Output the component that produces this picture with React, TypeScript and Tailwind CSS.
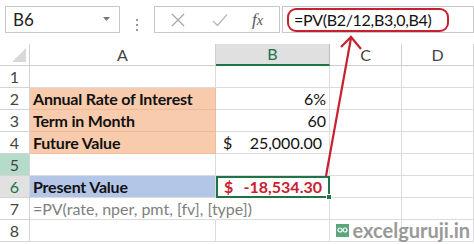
const cols = "grid grid-cols-[30px_186px_114px_72px_72px]";

function RowHead({ n, cls = "" }: { n: number; cls?: string }) {
  return (
    <div
      className={`h-[22px] border-r border-b border-[#d4d4d4] flex items-center justify-center text-[16px] text-[#444] ${cls}`}
    >
      {n}
    </div>
  );
}

function Cell({ children, cls = "" }: { children?: React.ReactNode; cls?: string }) {
  return (
    <div className={`h-[22px] border-r border-b border-[#dcdcdc] flex items-center text-[16px] ${cls}`}>
      {children}
    </div>
  );
}

export default function App() {
  return (
    <div className="relative w-[474px] h-[244px] overflow-hidden bg-white font-['Lato',sans-serif] text-[#111]">
      {/* formula bar */}
      <div className="flex h-[44px] pt-[6px]">
        <div className="ml-[5px] w-[115px] h-[27px] border border-[#c8c8c8] flex items-center justify-between px-[7px]">
          <span className="text-[17px] text-[#222]">B6</span>
          <svg width="7" height="5" viewBox="0 0 7 5" className="mr-[2px]">
            <path d="M0 0h7L3.5 4z" fill="#777" />
          </svg>
        </div>
        <div className="w-[34px] flex flex-col items-center justify-center gap-[3px]">
          <span className="w-[2px] h-[2px] bg-[#999]" />
          <span className="w-[2px] h-[2px] bg-[#999]" />
          <span className="w-[2px] h-[2px] bg-[#999]" />
        </div>
        <div className="w-[126px] h-[27px] border border-[#c8c8c8] flex items-center">
          <svg width="14" height="14" viewBox="0 0 14 14" className="ml-[16px]">
            <path d="M1 1l12 12M13 1L1 13" stroke="#a8a8a8" strokeWidth="1.3" />
          </svg>
          <svg width="16" height="14" viewBox="0 0 16 14" className="ml-[27px]">
            <path d="M1 8l4.5 4.5L15 1.5" stroke="#b8b8b8" strokeWidth="1.3" fill="none" />
          </svg>
          <span className="ml-[24px] font-['Liberation_Serif',serif] italic text-[17px] text-[#555]">
            f<span className="text-[14px]">x</span>
          </span>
        </div>
        <div className="flex-1 ml-[2px] h-[27px] border border-[#c8c8c8] flex items-center">
          <div className="ml-[4px] h-[24px] w-[162px] border-2 border-[#c9202f] rounded-[9px] flex items-center pl-[5px] text-[16px] tracking-[-0.3px] text-[#111]">
            =PV(B2/12,B3,0,B4)
          </div>
        </div>
      </div>

      {/* column headers */}
      <div className={cols}>
        <div className="h-[22px] border-r border-b border-[#cfcfcf] relative">
          <svg width="14" height="14" viewBox="0 0 14 14" className="absolute right-[3px] bottom-[3px]">
            <path d="M14 0v14H0z" fill="#d8d8d8" />
          </svg>
        </div>
        <div className="h-[22px] border-r border-b border-[#cfcfcf] flex items-center justify-center text-[16px] text-[#444]">A</div>
        <div className="h-[22px] bg-[#e0e0e0] border-r border-[#bdbdbd] border-b-2 border-b-[#217346] flex items-center justify-center text-[16px] text-[#217346]">B</div>
        <div className="h-[22px] border-r border-b border-[#cfcfcf] flex items-center justify-center text-[16px] text-[#444]">C</div>
        <div className="h-[22px] border-r border-b border-[#cfcfcf] flex items-center justify-center text-[16px] text-[#444]">D</div>
      </div>

      {/* rows */}
      <div className={cols}>
        <RowHead n={1} />
        <Cell />
        <Cell />
        <Cell />
        <Cell />

        <RowHead n={2} />
        <Cell cls="bg-[#f8cbad] border-[#eebc9c] font-bold tracking-[-0.2px] pl-[3px]">Annual Rate of Interest</Cell>
        <Cell cls="justify-end pr-[3px] border-[#cfcfcf]">6%</Cell>
        <Cell />
        <Cell />

        <RowHead n={3} />
        <Cell cls="bg-[#f8cbad] border-[#eebc9c] font-bold tracking-[-0.2px] pl-[3px]">Term in Month</Cell>
        <Cell cls="justify-end pr-[3px] border-[#cfcfcf]">60</Cell>
        <Cell />
        <Cell />

        <RowHead n={4} />
        <Cell cls="bg-[#f8cbad] border-[#eebc9c] font-bold tracking-[-0.2px] pl-[3px]">Future Value</Cell>
        <Cell cls="justify-between px-[7px] border-[#cfcfcf]">
          <span>$</span>
          <span>25,000.00</span>
        </Cell>
        <Cell />
        <Cell />

        <RowHead n={5} cls="bg-[#b5dccb] text-[#3d6b55]" />
        <Cell />
        <Cell />
        <Cell />
        <Cell />

        <RowHead n={6} cls="bg-[#e1e1e1] text-[#217346]" />
        <Cell cls="bg-[#b4c6e7] font-bold tracking-[-0.2px] pl-[3px]">Present Value</Cell>
        <div className="relative h-[22px] border-2 border-[#217346] flex items-center justify-between px-[6px] text-[16px] font-bold text-[#c9202f]">
          <span>$</span>
          <span>-18,534.30</span>
          <span className="absolute right-[-4px] bottom-[-4px] w-[6px] h-[6px] bg-[#217346] border border-white" />
        </div>
        <Cell />
        <Cell />

        <RowHead n={7} />
        <Cell cls="overflow-visible whitespace-nowrap pl-[3px] text-[#808080] border-r-transparent">
          <span className="relative z-10">=PV(rate, nper, pmt, [fv], [type])</span>
        </Cell>
        <Cell />
        <Cell />
        <Cell />

        <RowHead n={8} />
        <Cell />
        <Cell />
        <Cell />
        <Cell />
      </div>

      {/* arrow */}
      <svg className="absolute left-0 top-0 pointer-events-none" width="474" height="244">
        <path d="M326 176L351 38" stroke="#c9202f" strokeWidth="2.2" fill="none" />
        <path d="M341 47L351 37L361 49" stroke="#c9202f" strokeWidth="2.2" fill="none" />
      </svg>

      {/* watermark */}
      <div className="absolute right-[4px] bottom-[4px] flex items-center gap-[4px]">
        <svg width="13" height="13" viewBox="0 0 13 13">
          <rect width="13" height="13" fill="#5aa77e" />
          <circle cx="4" cy="6" r="2" fill="none" stroke="#fff" strokeWidth="1.2" />
          <circle cx="9" cy="6" r="2" fill="none" stroke="#fff" strokeWidth="1.2" />
        </svg>
        <span className="text-[20px] font-bold text-[#999] leading-none">excelguruji.in</span>
      </div>
    </div>
  );
}
